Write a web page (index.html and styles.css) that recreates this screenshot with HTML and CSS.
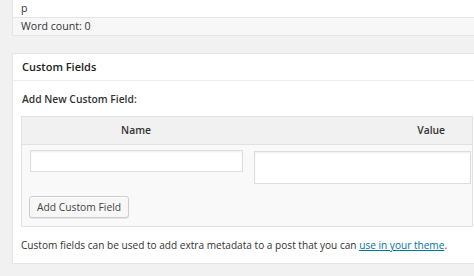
FILE: index.html
```html
<!DOCTYPE html>
<html lang="en">
<head>
  <meta charset="UTF-8" />
  <title>Custom Fields</title>
  <link rel="stylesheet" href="styles.css">
</head>
<body>

  <div class="editor">
    <div class="editor-path">p</div>
    <div class="word-count">Word count: 0</div>
  </div>

  <!-- Custom fields box -->
  <div class="postbox">
    <h3 class="hndle">Custom Fields</h3>
    <div class="inside">
      <p class="add-new">Add New Custom Field:</p>
      <div class="meta-table">
        <div class="meta-head">
          <div class="col-name">Name</div>
          <div class="col-value">Value</div>
        </div>
        <div class="meta-row">
          <div class="cell-name"><input type="text" class="meta-key"></div>
          <div class="cell-value"><textarea class="meta-value"></textarea></div>
        </div>
        <div class="meta-submit">
          <button class="button">Add Custom Field</button>
        </div>
      </div>
      <p class="desc">Custom fields can be used to add extra metadata to a post that you can <a href="#">use in your theme</a>.</p>
    </div>
  </div>

</body>
</html>
```

FILE: styles.css
```css
body {
  margin: 0;
  background: #f1f1f1;
  font-family: "Open Sans", "Liberation Sans", sans-serif;
  font-size: 10.3px;
  color: #333;
  overflow: hidden;
}
.editor {
  margin-left: 12px;
  width: 470px;
  background: #fff;
  border: 1px solid #e5e5e5;
  border-top: none;
}
.editor-path {
  height: 17px;
  line-height: 17px;
  padding: 0 8px;
  font-size: 10.6px;
}
.word-count {
  height: 17px;
  line-height: 17px;
  padding: 0 8px;
  font-size: 10.6px;
  background: #f7f7f7;
  border-top: 1px solid #e5e5e5;
}
.postbox {
  margin: 17px 0 0 12px;
  width: 470px;
  background: #fff;
  border: 1px solid #e5e5e5;
  box-shadow: 0 1px 1px rgba(0,0,0,0.04);
}
.hndle {
  margin: 0;
  height: 26px;
  line-height: 26px;
  padding: 0 9px;
  font-size: 11px;
  font-weight: 600;
  color: #222;
  border-bottom: 1px solid #eee;
}
.inside {
  padding: 0 8px 9px;
}
.add-new {
  margin: 9px 0 8px 1px;
  line-height: 18px;
  font-weight: 600;
}
.meta-table {
  width: 452px;
  box-sizing: border-box;
  border: 1px solid #e1e1e1;
  background: #f9f9f9;
}
.meta-head {
  display: grid;
  grid-template-columns: 228px 1fr;
  height: 27px;
  line-height: 27px;
  background: #f1f1f1;
  border-bottom: 1px solid #e1e1e1;
  font-weight: 600;
}
.col-name {
  text-align: center;
}
.col-value {
  text-align: right;
  padding-right: 27px;
}
.meta-row {
  display: grid;
  grid-template-columns: 228px 1fr;
}
.cell-name {
  padding: 5px 0 0 8px;
}
.cell-value {
  padding: 6px 0 0 4px;
}
input, textarea {
  display: block;
  box-sizing: border-box;
  border: 1px solid #ddd;
  background: #fff;
  box-shadow: inset 0 1px 2px rgba(0,0,0,0.07);
  margin: 0;
  font-family: inherit;
}
.meta-key {
  width: 213px;
  height: 22px;
}
.meta-value {
  width: 217px;
  height: 33px;
  resize: none;
}
.meta-submit {
  padding: 12px 7px 8px;
}
.button {
  display: block;
  width: 100px;
  height: 22px;
  padding: 0;
  background: #f7f7f7;
  border: 1px solid #ccc;
  border-radius: 3px;
  box-shadow: inset 0 1px 0 #fff, 0 1px 0 rgba(0,0,0,0.08);
  font-family: inherit;
  font-size: 10.3px;
  color: #444;
}
.desc {
  margin: 9px 0 0;
  line-height: 18px;
  font-size: 10.1px;
}
.desc a {
  color: #0074a2;
}
```
